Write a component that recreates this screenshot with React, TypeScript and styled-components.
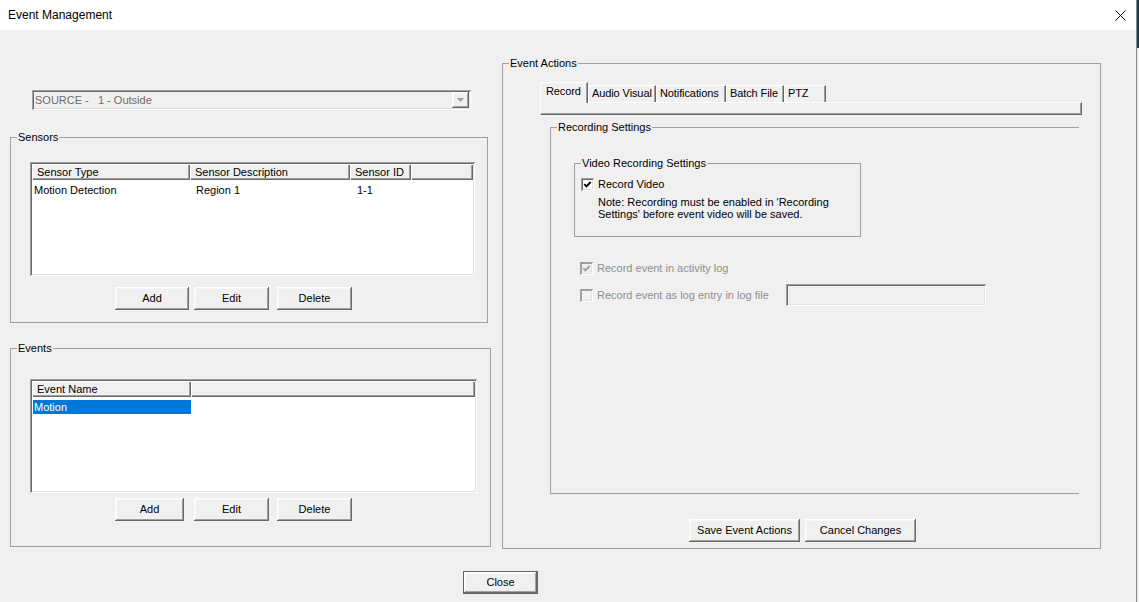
import React from "react";
import styled, { createGlobalStyle, css } from "styled-components";

const GlobalStyle = createGlobalStyle`
  html, body {
    margin: 0;
    padding: 0;
  }
  body {
    background: #f0f0f0;
    font-family: "Liberation Sans", Arial, sans-serif;
    font-size: 11px;
    color: #000;
    overflow: hidden;
  }
  * {
    box-sizing: border-box;
  }
`;

// classic 3D edges
const sunken = css`
  padding: 2px;
  box-shadow: inset 1px 1px 0 #a0a0a0, inset -1px -1px 0 #ffffff,
    inset 2px 2px 0 #696969, inset -2px -2px 0 #e3e3e3;
`;

const raised = css`
  box-shadow: inset -1px -1px 0 #696969, inset 1px 1px 0 #ffffff,
    inset -2px -2px 0 #a0a0a0, inset 2px 2px 0 #f8f8f8;
`;

const Screen = styled.div`
  display: flex;
  width: 1139px;
  height: 602px;
`;

const Dialog = styled.div`
  width: 1137px;
  height: 100%;
  border-right: 1px solid #8a8a8a;
  display: flex;
  flex-direction: column;
  background: #f0f0f0;
`;

const Backdrop = styled.div`
  flex: 1;
  background: linear-gradient(#1c3a63 0 48px, #ececec 48px);
`;

const TitleBar = styled.div`
  height: 30px;
  flex-shrink: 0;
  background: #ffffff;
  display: flex;
  align-items: center;
  justify-content: space-between;
  padding: 0 10px 0 8px;
  font-size: 12px;
`;

const Body = styled.div`
  flex: 1;
  padding: 27px 0 0 10px;
`;

const MainRow = styled.div`
  display: flex;
  align-items: flex-start;
  gap: 11px;
`;

const Column = styled.div<{ $w: number }>`
  width: ${(p) => p.$w}px;
  display: flex;
  flex-direction: column;
  align-items: flex-start;
`;

const GroupBox = styled.fieldset<{
  $w: number;
  $h: number;
  $mt?: number;
  $ml?: number;
  $open?: boolean;
}>`
  display: block;
  width: ${(p) => p.$w}px;
  height: ${(p) => p.$h}px;
  margin: ${(p) => p.$mt ?? 0}px 0 0 ${(p) => p.$ml ?? 0}px;
  padding: 0;
  min-width: 0;
  border: 1px solid #a0a0a0;
  ${(p) => p.$open && "border-right: none;"}
`;

const Legend = styled.legend`
  margin-left: 6px;
  padding: 0 1px;
  font-size: 11px;
  line-height: 13px;
`;

const Combo = styled.div`
  ${sunken};
  width: 439px;
  height: 20px;
  margin: 33px 0 0 22px;
  display: flex;
  align-items: center;
  background: #f0f0f0;
  color: #6d6d6d;
`;

const ComboText = styled.span`
  flex: 1;
  padding-left: 1px;
  line-height: 16px;
  white-space: pre;
`;

const ComboArrow = styled.span`
  ${raised};
  width: 17px;
  height: 16px;
  display: flex;
  align-items: center;
  justify-content: center;
  color: #a0a0a0;
`;

const ListFrame = styled.div<{ $w: number; $h: number; $mt: number }>`
  ${sunken};
  width: ${(p) => p.$w}px;
  height: ${(p) => p.$h}px;
  margin: ${(p) => p.$mt}px 0 0 19px;
  background: #ffffff;
`;

const HeaderRow = styled.div`
  display: flex;
  height: 16px;
  background: #f0f0f0;
`;

const HeaderCell = styled.div<{ $w?: number }>`
  ${(p) => (p.$w ? `width: ${p.$w}px; flex: none;` : "flex: 1;")}
  padding: 1px 0 0 5px;
  line-height: 14px;
  white-space: nowrap;
  box-shadow: inset 1px 1px 0 #ffffff, inset -1px -1px 0 #696969,
    inset -2px -2px 0 #a0a0a0;
`;

const DataRow = styled.div<{ $indent?: number }>`
  display: flex;
  height: 14px;
  margin-top: 3px;
  padding-left: ${(p) => p.$indent ?? 0}px;
`;

const DataCell = styled.div<{ $w: number; $pad: number; $selected?: boolean }>`
  width: ${(p) => p.$w}px;
  padding-left: ${(p) => p.$pad}px;
  line-height: 14px;
  white-space: nowrap;
  background: ${(p) => (p.$selected ? "#0078d7" : "transparent")};
  color: ${(p) => (p.$selected ? "#ffffff" : "#000000")};
`;

const ButtonRow = styled.div<{ $mt: number; $ml: number }>`
  display: flex;
  margin: ${(p) => p.$mt}px 0 0 ${(p) => p.$ml}px;
`;

const Button = styled.button<{ $w: number; $ml?: number; $default?: boolean }>`
  ${raised};
  width: ${(p) => p.$w}px;
  height: 23px;
  margin: 0 0 0 ${(p) => p.$ml ?? 0}px;
  padding: 0;
  border: ${(p) => (p.$default ? "1px solid #646464" : "none")};
  background: #f0f0f0;
  font-family: inherit;
  font-size: 11px;
  color: #000;
  line-height: 13px;
`;

const TabStrip = styled.div`
  display: flex;
  align-items: flex-end;
  height: 20px;
  margin: 12px 0 0 37px;
`;

const Tab = styled.div<{ $w: number; $active?: boolean }>`
  position: relative;
  z-index: ${(p) => (p.$active ? 1 : 0)};
  width: ${(p) => p.$w}px;
  height: ${(p) => (p.$active ? 21 : 17)}px;
  margin-bottom: ${(p) => (p.$active ? -1 : 0)}px;
  padding: ${(p) => (p.$active ? "2px 0 0 5px" : "1px 0 0 3px")};
  line-height: 13px;
  white-space: nowrap;
  letter-spacing: -0.1px;
  background: #f0f0f0;
  border-top: 1px solid #ffffff;
  border-left: 1px solid #ffffff;
  border-right: 1px solid #696969;
  box-shadow: inset -1px 0 0 #a0a0a0;
`;

const TabPanel = styled.div`
  width: 542px;
  height: 13px;
  margin-left: 37px;
  border-top: 1px solid #ffffff;
  border-left: 1px solid #ffffff;
  border-right: 1px solid #696969;
  border-bottom: 1px solid #696969;
  box-shadow: inset -1px -1px 0 #a0a0a0;
`;

const CheckRow = styled.div<{ $mt: number; $ml: number; $h?: number }>`
  display: flex;
  align-items: center;
  gap: 4px;
  height: ${(p) => p.$h ?? 13}px;
  margin: ${(p) => p.$mt}px 0 0 ${(p) => p.$ml}px;
`;

const CheckBox = styled.span<{ $disabled?: boolean }>`
  width: 13px;
  height: 13px;
  flex: none;
  display: flex;
  align-items: center;
  justify-content: center;
  background: ${(p) => (p.$disabled ? "#f0f0f0" : "#ffffff")};
  color: ${(p) => (p.$disabled ? "#a0a0a0" : "#000000")};
  box-shadow: inset 1px 1px 0 #a0a0a0, inset -1px -1px 0 #ffffff,
    inset 2px 2px 0 ${(p) => (p.$disabled ? "#a0a0a0" : "#696969")},
    inset -2px -2px 0 #e3e3e3;
`;

const CheckLabel = styled.span<{ $disabled?: boolean; $w?: number }>`
  line-height: 13px;
  white-space: nowrap;
  color: ${(p) => (p.$disabled ? "#8f8f8f" : "#000000")};
  ${(p) => p.$w && `width: ${p.$w}px;`}
`;

const Note = styled.div`
  margin: 5px 0 0 23px;
  line-height: 12px;
`;

const TextBox = styled.div`
  ${sunken};
  width: 200px;
  height: 22px;
  background: #f0f0f0;
`;

const Check = ({ on, disabled }: { on?: boolean; disabled?: boolean }) => (
  <CheckBox $disabled={disabled}>
    {on && (
      <svg width="9" height="9" viewBox="0 0 9 9">
        <path
          d="M1.3 4.2 L3.4 6.4 L7.7 2"
          fill="none"
          stroke="currentColor"
          strokeWidth="1.9"
        />
      </svg>
    )}
  </CheckBox>
);

export default function App() {
  return (
    <>
      <GlobalStyle />
      <Screen>
        <Dialog>
          <TitleBar>
            <span>Event Management</span>
            <svg width="11" height="11" viewBox="0 0 11 11">
              <path d="M0.5 0.5 L10.5 10.5 M10.5 0.5 L0.5 10.5" stroke="#000" strokeWidth="1" />
            </svg>
          </TitleBar>
          <Body>
            <MainRow>
              <Column $w={481}>
                <Combo>
                  <ComboText>{"SOURCE -   1 - Outside"}</ComboText>
                  <ComboArrow>
                    <svg width="7" height="4" viewBox="0 0 7 4">
                      <polygon points="0,0 7,0 3.5,4" fill="currentColor" />
                    </svg>
                  </ComboArrow>
                </Combo>

                <GroupBox $w={478} $h={192} $mt={21}>
                  <Legend>Sensors</Legend>
                  <ListFrame $w={445} $h={114} $mt={18}>
                    <HeaderRow>
                      <HeaderCell $w={158}>Sensor Type</HeaderCell>
                      <HeaderCell $w={160}>Sensor Description</HeaderCell>
                      <HeaderCell $w={61}>Sensor ID</HeaderCell>
                      <HeaderCell />
                    </HeaderRow>
                    <DataRow>
                      <DataCell $w={158} $pad={2}>Motion Detection</DataCell>
                      <DataCell $w={160} $pad={6}>Region 1</DataCell>
                      <DataCell $w={60} $pad={7}>1-1</DataCell>
                    </DataRow>
                  </ListFrame>
                  <ButtonRow $mt={11} $ml={104}>
                    <Button $w={74}>Add</Button>
                    <Button $w={75} $ml={5}>Edit</Button>
                    <Button $w={75} $ml={8}>Delete</Button>
                  </ButtonRow>
                </GroupBox>

                <GroupBox $w={481} $h={205} $mt={19}>
                  <Legend>Events</Legend>
                  <ListFrame $w={447} $h={114} $mt={24}>
                    <HeaderRow>
                      <HeaderCell $w={159}>Event Name</HeaderCell>
                      <HeaderCell />
                    </HeaderRow>
                    <DataRow $indent={1}>
                      <DataCell $w={158} $pad={1} $selected>
                        Motion
                      </DataCell>
                    </DataRow>
                  </ListFrame>
                  <ButtonRow $mt={5} $ml={104}>
                    <Button $w={69}>Add</Button>
                    <Button $w={75} $ml={10}>Edit</Button>
                    <Button $w={75} $ml={8}>Delete</Button>
                  </ButtonRow>
                </GroupBox>
              </Column>

              <GroupBox $w={599} $h={492}>
                <Legend>Event Actions</Legend>
                <TabStrip>
                  <Tab $w={48} $active>Record</Tab>
                  <Tab $w={68}>Audio Visual</Tab>
                  <Tab $w={70}>Notifications</Tab>
                  <Tab $w={58}>Batch File</Tab>
                  <Tab $w={42}>PTZ</Tab>
                </TabStrip>
                <TabPanel />

                <GroupBox $w={529} $h={373} $mt={6} $ml={47} $open>
                  <Legend>Recording Settings</Legend>
                  <GroupBox $w={287} $h={80} $mt={23} $ml={23}>
                    <Legend>Video Recording Settings</Legend>
                    <CheckRow $mt={8} $ml={6}>
                      <Check on />
                      <CheckLabel>Record Video</CheckLabel>
                    </CheckRow>
                    <Note>
                      Note: Recording must be enabled in 'Recording
                      <br />
                      Settings' before event video will be saved.
                    </Note>
                  </GroupBox>
                  <CheckRow $mt={25} $ml={29}>
                    <Check on disabled />
                    <CheckLabel $disabled>Record event in activity log</CheckLabel>
                  </CheckRow>
                  <CheckRow $mt={9} $ml={29} $h={22}>
                    <Check disabled />
                    <CheckLabel $disabled $w={185}>
                      Record event as log entry in log file
                    </CheckLabel>
                    <TextBox />
                  </CheckRow>
                </GroupBox>

                <ButtonRow $mt={25} $ml={186}>
                  <Button $w={111}>Save Event Actions</Button>
                  <Button $w={111} $ml={5}>Cancel Changes</Button>
                </ButtonRow>
              </GroupBox>
            </MainRow>

            <ButtonRow $mt={22} $ml={453}>
              <Button $w={75} $default>Close</Button>
            </ButtonRow>
          </Body>
        </Dialog>
        <Backdrop />
      </Screen>
    </>
  );
}
